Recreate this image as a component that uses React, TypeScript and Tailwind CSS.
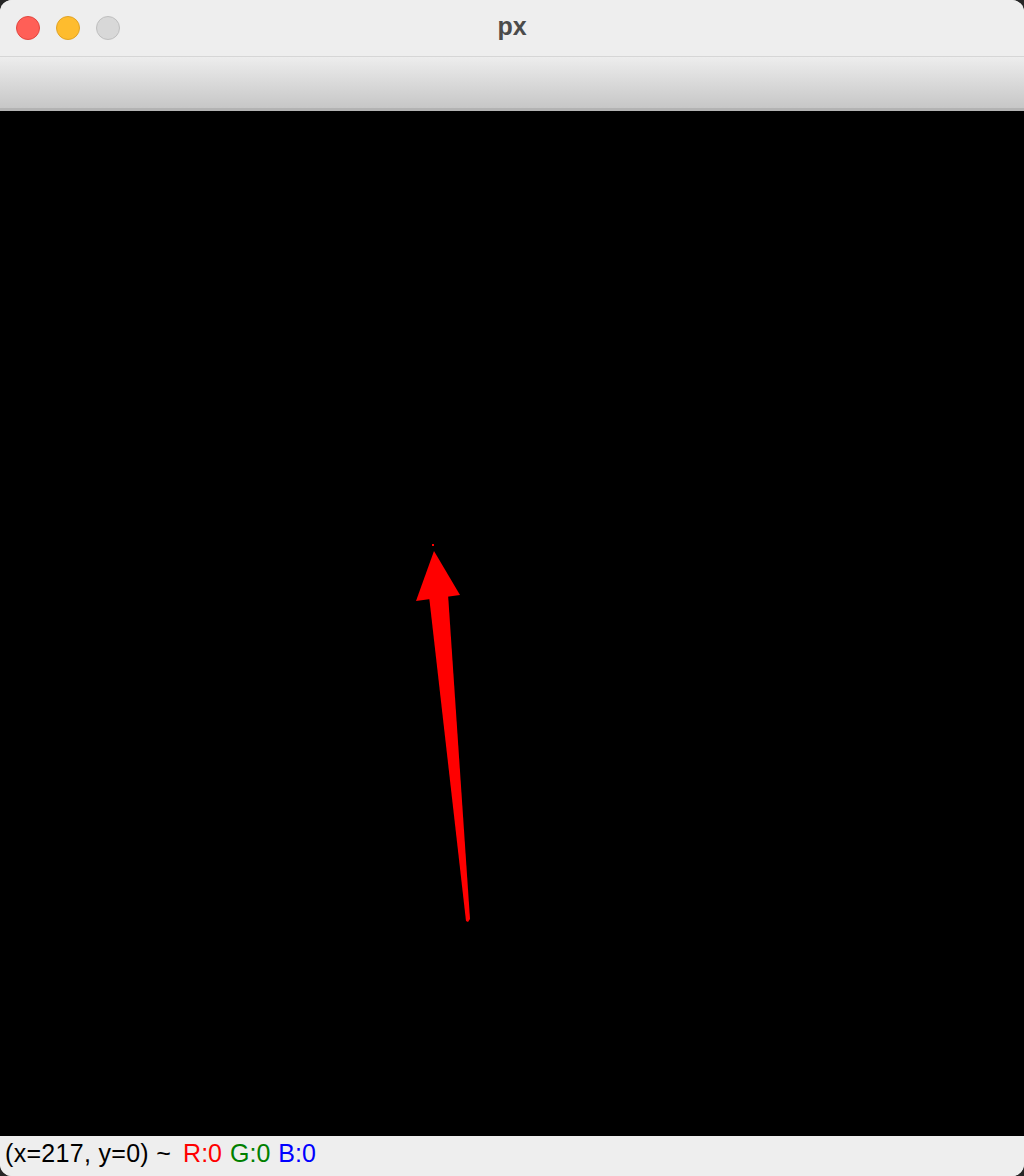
import React from 'react'

const font = { fontFamily: '"Liberation Sans", Arial, sans-serif' }

function TrafficLights() {
  return (
    <div className="flex items-center gap-4 pl-4">
      <div className="w-6 h-6 rounded-full bg-[#ff5f57] border border-[#e2463f]" />
      <div className="w-6 h-6 rounded-full bg-[#febc2e] border border-[#e1a325]" />
      <div className="w-6 h-6 rounded-full bg-[#d8d8d8] border border-[#bfbfbf]" />
    </div>
  )
}

function Arrow() {
  return (
    <svg className="block" width="1024" height="1025" viewBox="0 111 1024 1025">
      <polygon points="429,596 448,594 470,919 468,922 466,921" fill="#ff0000" />
      <polygon points="434,551 416,601 460,595" fill="#ff0000" />
      <rect x="432" y="544" width="2" height="2" fill="#ff0000" />
    </svg>
  )
}

export default function App() {
  return (
    <div className="w-[1024px] h-[1176px] bg-[#262626]" style={font}>
      <div className="w-full h-full rounded-[12px] overflow-hidden flex flex-col bg-[#eeeeee]">
        {/* Title bar */}
        <div className="relative h-[57px] shrink-0 flex items-center border-b border-[#d6d6d6] bg-[#eeeeee]">
          <TrafficLights />
          <div className="absolute inset-0 flex items-center justify-center pb-[3px] pointer-events-none">
            <span className="text-[25px] font-bold text-[#4b4b4b] leading-none">px</span>
          </div>
        </div>

        {/* Toolbar */}
        <div className="h-[54px] shrink-0 bg-gradient-to-b from-[#ededed] to-[#c7c7c7] border-b-[3px] border-[#b3b3b3]" />

        {/* Canvas */}
        <div className="h-[1025px] shrink-0 bg-black overflow-hidden">
          <Arrow />
        </div>

        {/* Status bar */}
        <div className="flex-1 flex items-center pl-[5px] pb-[6px] bg-[#eeeeee] text-[25px] leading-none whitespace-pre">
          <span className="text-black tracking-[0.3px]">(x=217, y=0) ~</span>
          <span className="ml-[12px] text-[#ff0000]">R:0</span>
          <span className="ml-[8px] text-[#008000]">G:0</span>
          <span className="ml-[8px] text-[#0000ff]">B:0</span>
        </div>
      </div>
    </div>
  )
}
